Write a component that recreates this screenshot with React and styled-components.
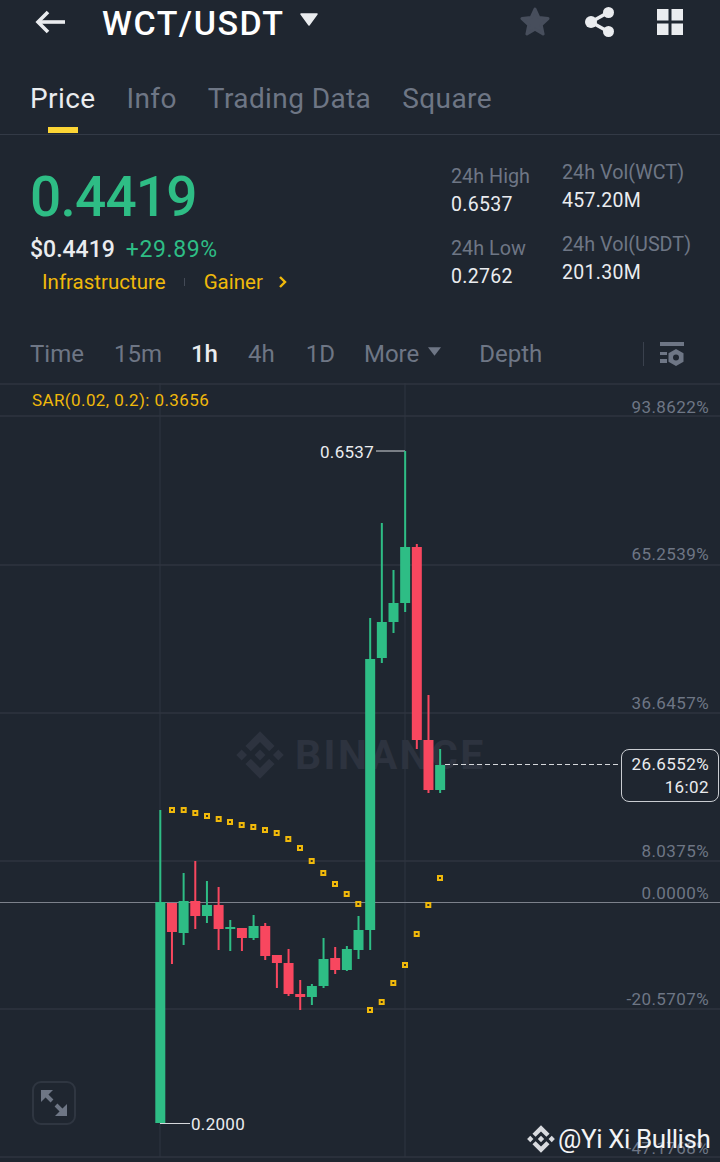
import React from "react";
import styled, { createGlobalStyle } from "styled-components";

const FONT = `Roboto, "Liberation Sans", sans-serif`;
const BG = "#1f2630";
const GREEN = "#2ebd85";
const RED = "#f8475f";
const GOLD = "#f0b90b";
const GREY = "#6e7685";
const CHART_TOP = 383;

const GlobalStyle = createGlobalStyle`
  html, body {
    margin: 0;
    padding: 0;
    background: ${BG};
  }
`;

const Page = styled.div`
  width: 720px;
  height: 1162px;
  overflow: hidden;
  background: ${BG};
  font-family: ${FONT};
  color: #eaecef;
`;

const Header = styled.div`
  display: flex;
  align-items: center;
  height: 44px;
  padding: 0 37px 0 35px;
`;

const Title = styled.div`
  margin: 2px 0 0 37px;
  font-size: 34px;
  font-weight: 500;
  letter-spacing: 1.500px;
  color: #fff;
`;

const HeaderActions = styled.div`
  display: flex;
  align-items: center;
  gap: 35px;
  margin-left: auto;
`;

const GridIcon = styled.svg`
  margin-left: 7px;
`;

const TabBar = styled.div`
  display: flex;
  align-items: center;
  gap: 31px;
  height: 91px;
  padding: 18px 0 0 30px;
  box-sizing: border-box;
  border-bottom: 1px solid #333a46;
`;

const Tab = styled.div`
  position: relative;
  font-size: 28px;
  letter-spacing: 0.400px;
  color: ${(p) => (p.$active ? "#eaecef" : GREY)};

  &::after {
    content: "";
    display: ${(p) => (p.$active ? "block" : "none")};
    position: absolute;
    left: 18px;
    bottom: -18px;
    width: 30px;
    height: 6px;
    background: #fcd535;
  }
`;

const Summary = styled.div`
  display: flex;
  height: 195px;
  padding-left: 30px;
`;

const PriceColumn = styled.div`
  display: flex;
  flex-direction: column;
  width: 421px;
`;

const LastPrice = styled.div`
  margin-top: 27px;
  font-size: 55px;
  line-height: 70px;
  font-weight: 500;
  letter-spacing: -0.800px;
  color: ${GREEN};
`;

const FiatRow = styled.div`
  display: flex;
  gap: 11px;
  margin-top: 3px;
  line-height: 30px;
  font-size: 23px;
`;

const Fiat = styled.span`
  font-weight: 500;
  color: #eaecef;
`;

const Change = styled.span`
  letter-spacing: 0.600px;
  color: ${GREEN};
`;

const TagRow = styled.div`
  display: flex;
  align-items: center;
  margin: 2px 0 0 12px;
  line-height: 30px;
  font-size: 20.500px;
  color: ${GOLD};
`;

const TagDivider = styled.span`
  width: 1px;
  height: 8px;
  margin: 0 19px 0 18px;
  background: #434a56;
`;

const TagChevron = styled.svg`
  margin-left: 15px;
`;

const StatColumn = styled.div`
  display: flex;
  flex-direction: column;
  width: ${(p) => p.$width}px;
  padding-top: ${(p) => p.$top}px;
`;

const StatLabel = styled.div`
  font-size: 19.800px;
  line-height: 26px;
  color: ${GREY};
`;

const StatValue = styled.div`
  margin: 2px 0 18px;
  font-size: 19.500px;
  line-height: 26px;
  letter-spacing: 0.300px;
  color: #eaecef;
`;

const IntervalBar = styled.div`
  display: flex;
  align-items: center;
  height: 48px;
  margin-bottom: 5px;
  padding: 0 36px 0 30px;
`;

const Interval = styled.div`
  margin-right: ${(p) => p.$gap}px;
  font-size: 24px;
  font-weight: ${(p) => (p.$active ? 500 : 400)};
  color: ${(p) => (p.$active ? "#eaecef" : GREY)};
`;

const Caret = styled.svg`
  margin: ${(p) => p.$margin};
`;

const BarSettings = styled.div`
  display: flex;
  align-items: center;
  gap: 16px;
  margin-left: auto;
`;

const BarDivider = styled.span`
  width: 1px;
  height: 24px;
  background: #3a414d;
`;

const Chart = styled.div`
  position: relative;
  height: 779px;
  overflow: hidden;
`;

const ChartLayer = styled.svg`
  position: absolute;
  left: 0;
  top: 0;
  display: block;
`;

const Watermark = styled.div`
  position: absolute;
  left: 236px;
  top: ${730 - CHART_TOP}px;
  display: flex;
  align-items: center;
  gap: 11px;
  height: 50px;
  font-size: 41px;
  font-weight: 700;
  letter-spacing: 2.400px;
  color: #2d333f;
`;

const AxisLabel = styled.div`
  position: absolute;
  right: 11px;
  top: ${(p) => p.$y - CHART_TOP - 11}px;
  line-height: 22px;
  font-size: 17px;
  letter-spacing: 0.400px;
  color: ${GREY};
`;

const IndicatorLabel = styled.div`
  position: absolute;
  left: 32px;
  top: 6px;
  line-height: 22px;
  font-size: 17px;
  letter-spacing: 0.400px;
  color: ${GOLD};
`;

const ExtremeLabel = styled.div`
  position: absolute;
  left: ${(p) => p.$x}px;
  top: ${(p) => p.$y - CHART_TOP - 11}px;
  line-height: 22px;
  font-size: 17px;
  letter-spacing: 0.300px;
  color: #eaecef;
`;

const LastTag = styled.div`
  position: absolute;
  left: 621px;
  top: ${749 - CHART_TOP}px;
  width: 98px;
  height: 53px;
  padding: 3px 9px 0 0;
  box-sizing: border-box;
  border: 1px solid #c9ccd1;
  border-radius: 8px;
  background: ${BG};
  text-align: right;
  line-height: 23px;
  font-size: 17px;
  letter-spacing: 0.400px;
  color: #eaecef;
`;

const ExpandButton = styled.div`
  position: absolute;
  left: 32px;
  top: ${1081 - CHART_TOP}px;
  display: flex;
  align-items: center;
  justify-content: center;
  width: 44px;
  height: 44px;
  box-sizing: border-box;
  border: 2px solid #2f3641;
  border-radius: 9px;
`;

const Credit = styled.div`
  position: absolute;
  left: 527px;
  top: ${1123 - CHART_TOP}px;
  display: flex;
  align-items: center;
  gap: 3px;
  height: 32px;
  white-space: nowrap;
  font-size: 26px;
  letter-spacing: -0.400px;
  color: #f2f3f5;
`;

// [color, wick top, body top, body bottom, wick bottom], left to right
const CANDLES = [
  ["g", 810, 902, 1123, 1123],
  ["r", 903, 903, 932, 964],
  ["g", 873, 901, 933, 945],
  ["r", 861, 901, 916, 929],
  ["g", 881, 905, 916, 923],
  ["r", 887, 905, 929, 950],
  ["g", 920, 927, 929, 951],
  ["r", 928, 928, 938, 951],
  ["g", 915, 926, 938, 940],
  ["r", 923, 926, 956, 960],
  ["r", 955, 955, 963, 988],
  ["r", 949, 963, 994, 996],
  ["r", 980, 994, 997, 1010],
  ["g", 984, 986, 997, 1005],
  ["g", 938, 959, 986, 988],
  ["r", 947, 958, 970, 974],
  ["g", 946, 949, 970, 971],
  ["g", 916, 930, 950, 959],
  ["g", 618, 659, 930, 950],
  ["g", 523, 622, 658, 663],
  ["g", 570, 603, 622, 633],
  ["g", 451, 547, 603, 612],
  ["r", 544, 547, 740, 749],
  ["r", 695, 740, 790, 793],
  ["g", 749, 765, 790, 793],
];

const SAR_DOTS = [
  [172, 810], [183.7, 810], [195.3, 813], [207, 816], [218.7, 819], [230, 822],
  [241.7, 825], [253.3, 827], [265, 830], [276.7, 833], [288.3, 839], [300, 848],
  [311.7, 861], [323.3, 873], [335, 884], [346.7, 894], [358.3, 904],
  [370, 1010], [381.7, 1002], [393.3, 983], [405, 965], [416.7, 934], [428.3, 905], [440, 878],
];

const GRID_ROWS = [384, 416, 565, 713, 861, 1009, 1157];
const GRID_COLUMNS = [160, 405];

const AXIS = [
  [407, "93.8622%"],
  [554, "65.2539%"],
  [703, "36.6457%"],
  [851, "8.0375%"],
  [893, "0.0000%"],
  [999, "-20.5707%"],
  [1148, "-47.1768%"],
];

const BinanceLogo = ({ size, color }) => (
  <svg width={size} height={size} viewBox="0 0 126 126" fill={color}>
    <path d="M38.73 53.2L63 28.93l24.27 24.27 14.12-14.12L63 .69 24.61 39.08z" />
    <path d="M.69 63l14.12-14.12L28.93 63 14.81 77.12z" />
    <path d="M38.73 72.8L63 97.07 87.27 72.8l14.12 14.12L63 125.31 24.61 86.92z" />
    <path d="M97.07 63l14.12-14.12L125.31 63l-14.12 14.12z" />
    <path d="M77.32 63L63 48.68 48.68 63 63 77.32z" />
  </svg>
);

const CandleStick = ({ index, data }) => {
  const [kind, wickTop, bodyTop, bodyBottom, wickBottom] = data;
  const x = 160.3 + index * 11.66;
  const fill = kind === "g" ? GREEN : RED;
  return (
    <g fill={fill}>
      <rect x={x - 1} y={wickTop} width={2} height={wickBottom - wickTop} />
      <rect x={x - 5} y={bodyTop} width={10} height={bodyBottom - bodyTop} />
    </g>
  );
};

const ChartDrawing = () => (
  <ChartLayer width="720" height="779" viewBox={`0 ${CHART_TOP} 720 779`}>
    {GRID_ROWS.map((y) => (
      <rect key={y} x="0" y={y - 1} width="720" height="2" fill="#2a303b" />
    ))}
    {GRID_COLUMNS.map((x) => (
      <rect key={x} x={x - 0.5} y={CHART_TOP} width="1" height="774" fill="#2f3541" />
    ))}
    <rect x="0" y="902" width="720" height="1" fill="#7c818b" />
    <path d="M376 451H405" stroke="#d5d7db" strokeWidth="1" />
    <path d="M160 1123.5H190" stroke="#d5d7db" strokeWidth="1" />
    <path d="M445 764.5H621" stroke="#d5d7db" strokeWidth="1" strokeDasharray="5 3" />
    {CANDLES.map((c, i) => (
      <CandleStick key={i} index={i} data={c} />
    ))}
    {SAR_DOTS.map(([x, y]) => (
      <g key={`${x}-${y}`}>
        <rect x={x - 3} y={y - 3} width="6" height="6" fill={GOLD} />
        <rect x={x - 1} y={y - 1} width="2" height="2" fill="#3a3320" />
      </g>
    ))}
  </ChartLayer>
);

const App = () => (
  <Page>
    <GlobalStyle />
    <Header>
      <svg width="30" height="24" viewBox="0 0 30 24" fill="none" stroke="#eaecef" strokeWidth="3.600">
        <path d="M30 12H3" />
        <path d="M13 2L3 12l10 10" />
      </svg>
      <Title>WCT/USDT</Title>
      <Caret width="18" height="13" viewBox="0 0 18 13" $margin="0 0 6px 15px">
        <path d="M1 1h16L9 12z" fill="#eaecef" stroke="#eaecef" strokeWidth="1.500" strokeLinejoin="round" />
      </Caret>
      <HeaderActions>
        <svg width="30" height="30" viewBox="0 0 30 30">
          <path
            d="M15 2l3.900 8.600 9.100 1-6.800 6.300 1.900 9.100-8.100-4.700-8.100 4.700 1.900-9.100L2 11.600l9.100-1z"
            fill="#474e5c"
            stroke="#474e5c"
            strokeWidth="3"
            strokeLinejoin="round"
          />
        </svg>
        <svg width="30" height="30" viewBox="0 0 30 30" fill="#eaecef">
          <circle cx="6" cy="15" r="6" />
          <circle cx="23.500" cy="5.500" r="5.500" />
          <circle cx="23.500" cy="24.500" r="5.500" />
          <path d="M6 15L23 5.500M6 15l17 9.500" stroke="#eaecef" strokeWidth="3.500" />
        </svg>
        <GridIcon width="26" height="26" viewBox="0 0 26 26" fill="#eaecef">
          <rect width="11.500" height="11.500" />
          <rect x="14.500" width="11.500" height="11.500" />
          <rect y="14.500" width="11.500" height="11.500" />
          <rect x="14.500" y="14.500" width="11.500" height="11.500" />
        </GridIcon>
      </HeaderActions>
    </Header>

    <TabBar>
      <Tab $active>Price</Tab>
      <Tab>Info</Tab>
      <Tab>Trading Data</Tab>
      <Tab>Square</Tab>
    </TabBar>

    <Summary>
      <PriceColumn>
        <LastPrice>0.4419</LastPrice>
        <FiatRow>
          <Fiat>$0.4419</Fiat>
          <Change>+29.89%</Change>
        </FiatRow>
        <TagRow>
          Infrastructure
          <TagDivider />
          Gainer
          <TagChevron width="9" height="12" viewBox="0 0 9 12" fill="none" stroke={GOLD} strokeWidth="2.400">
            <path d="M2 1l5 5-5 5" />
          </TagChevron>
        </TagRow>
      </PriceColumn>
      <StatColumn $width={111} $top={29}>
        <StatLabel>24h High</StatLabel>
        <StatValue>0.6537</StatValue>
        <StatLabel>24h Low</StatLabel>
        <StatValue>0.2762</StatValue>
      </StatColumn>
      <StatColumn $width={158} $top={25}>
        <StatLabel>24h Vol(WCT)</StatLabel>
        <StatValue>457.20M</StatValue>
        <StatLabel>24h Vol(USDT)</StatLabel>
        <StatValue>201.30M</StatValue>
      </StatColumn>
    </Summary>

    <IntervalBar>
      <Interval $gap={30}>Time</Interval>
      <Interval $gap={29}>15m</Interval>
      <Interval $gap={30} $active>1h</Interval>
      <Interval $gap={31}>4h</Interval>
      <Interval $gap={29}>1D</Interval>
      <Interval $gap={9}>More</Interval>
      <Caret width="13" height="9" viewBox="0 0 14 9" $margin="0 38px 6px 0">
        <path d="M0 0h14L7 9z" fill={GREY} />
      </Caret>
      <Interval $gap={0}>Depth</Interval>
      <BarSettings>
        <BarDivider />
        <svg width="24" height="24" viewBox="0 0 24 24" fill={GREY}>
          <rect width="24" height="4" />
          <rect y="10" width="7" height="3" />
          <rect y="17" width="7" height="4" />
          <path
            fillRule="evenodd"
            d="M16 7l7.500 4.300v8.400L16 24l-7.500-4.300v-8.400zM16 12.500a3 3 0 100 6 3 3 0 000-6z"
          />
        </svg>
      </BarSettings>
    </IntervalBar>

    <Chart>
      <Watermark>
        <BinanceLogo size={48} color="#2d333f" />
        BINANCE
      </Watermark>
      <ChartDrawing />
      <IndicatorLabel>SAR(0.02, 0.2): 0.3656</IndicatorLabel>
      {AXIS.map(([y, text]) => (
        <AxisLabel key={text} $y={y}>
          {text}
        </AxisLabel>
      ))}
      <ExtremeLabel $x={320} $y={452}>0.6537</ExtremeLabel>
      <ExtremeLabel $x={191} $y={1124}>0.2000</ExtremeLabel>
      <LastTag>
        26.6552%
        <br />
        16:02
      </LastTag>
      <ExpandButton>
        <svg width="26" height="26" viewBox="0 0 26 26" fill={GREY}>
          <path d="M0 0h12L0 12z" />
          <path d="M26 26H14l12-12z" />
          <path d="M5 5l6 6M15 15l6 6" stroke={GREY} strokeWidth="4" />
        </svg>
      </ExpandButton>
      <Credit>
        <BinanceLogo size={28} color="#d8dade" />
        @Yi Xi Bullish
      </Credit>
    </Chart>
  </Page>
);

export default App;
